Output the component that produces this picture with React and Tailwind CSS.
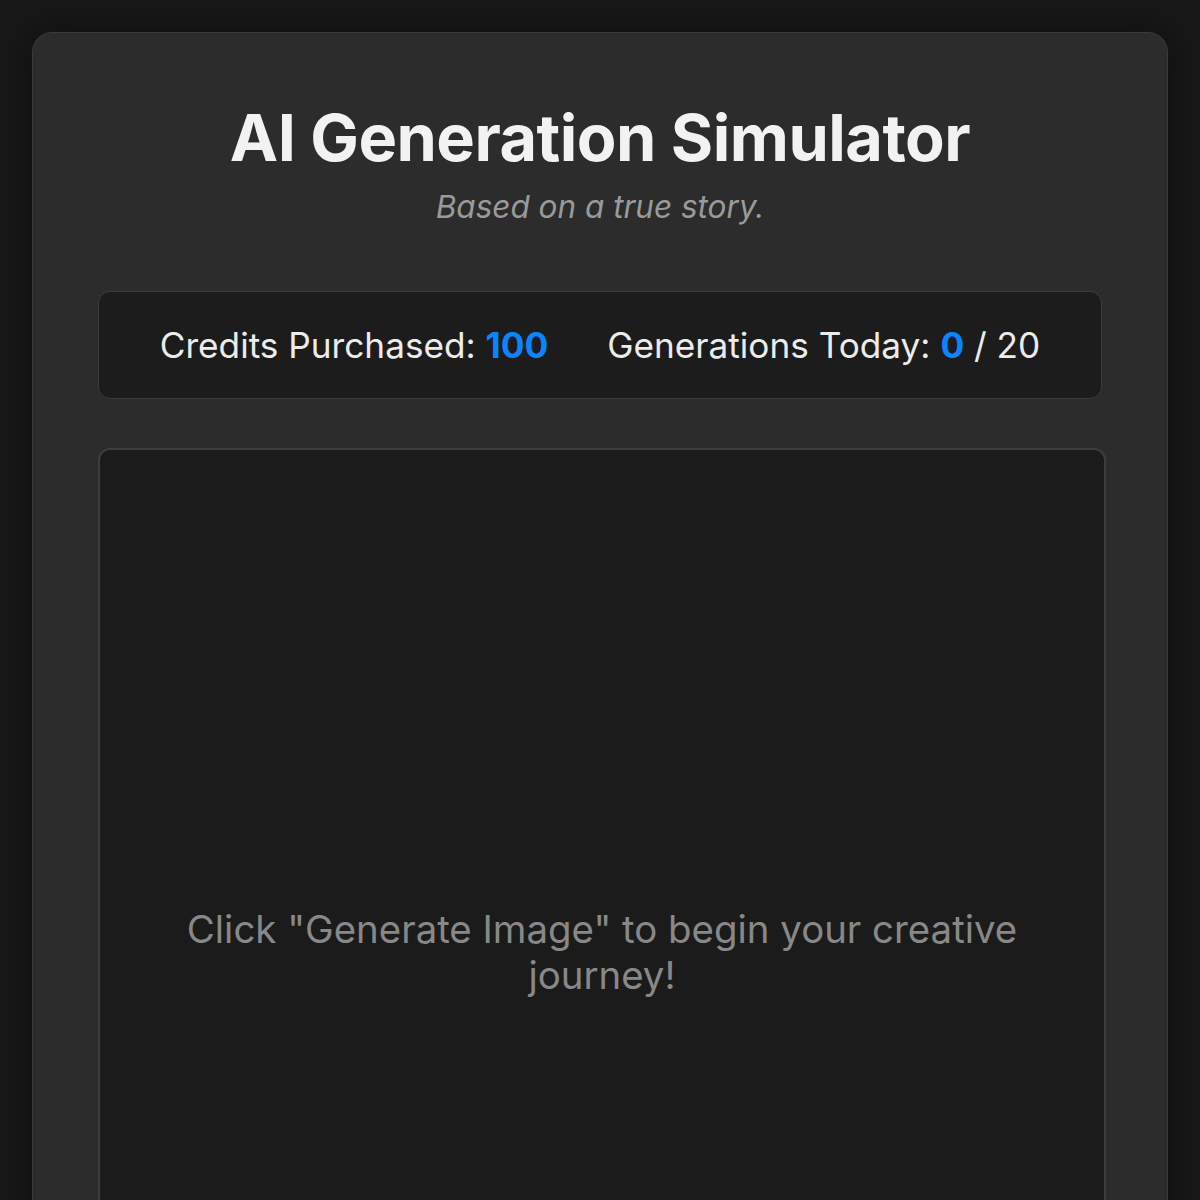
import React, { useState } from 'react';

const App = () => {
    const [credits] = useState(100);
    const [generations] = useState(0);
    const dailyLimit = 20;

    return (
        <div className="min-h-screen bg-[#181818] px-8 pt-8 font-['Inter','Noto_Sans',sans-serif]">
            <div className="bg-[#2c2c2c] border border-[#3b3b3b] rounded-[20px] shadow-[0_0_40px_rgba(0,0,0,0.45)] px-[65px] pt-[65px] pb-16">
                {/* Header */}
                <h1 className="text-center text-[64.8px] leading-[80px] font-bold text-[#f2f2f2] tracking-[-0.5px]">
                    AI Generation Simulator
                </h1>
                <p className="text-center text-[31.5px] leading-[40px] italic text-[#9a9a9a] mt-[9px]">
                    Based on a true story.
                </p>

                {/* Stats */}
                <div className="mt-[64px] flex justify-center items-center gap-[59px] h-[108px] bg-[#1c1c1c] border border-[#3c3c3c] rounded-xl text-[35.2px] text-[#ececec]">
                    <span>
                        Credits Purchased: <span className="font-bold text-[#0a84ff]">{credits}</span>
                    </span>
                    <span>
                        Generations Today: <span className="font-bold text-[#0a84ff]">{generations}</span> / {dailyLimit}
                    </span>
                </div>

                {/* Output area */}
                <div className="mt-[49px] w-[calc(100%+4px)] aspect-square bg-[#1b1b1b] border-2 border-[#3d3d3d] rounded-xl flex items-center justify-center px-[60px]">
                    <p className="text-center text-[38.4px] leading-[46px] text-[#888888]">
                        Click "Generate Image" to begin your creative journey!
                    </p>
                </div>
            </div>
        </div>
    );
};

export default App;
